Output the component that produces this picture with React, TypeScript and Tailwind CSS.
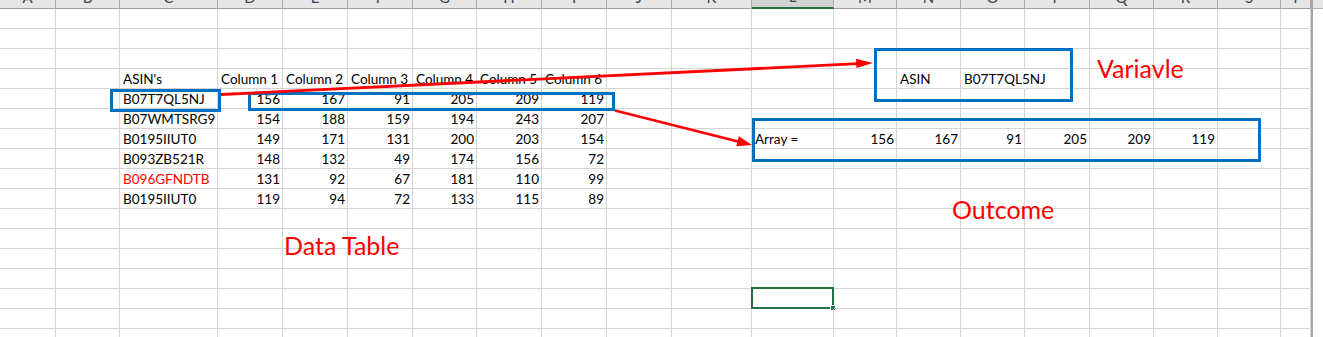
import React from 'react'

type Cell = { v: string; right?: boolean; red?: boolean; spill?: boolean }

const COLS = [
  { l: 'A', w: 'w-[56px]' },
  { l: 'B', w: 'w-[64px]' },
  { l: 'C', w: 'w-[98px]' },
  { l: 'D', w: 'w-[65px]' },
  { l: 'E', w: 'w-[65px]' },
  { l: 'F', w: 'w-[65px]' },
  { l: 'G', w: 'w-[64px]' },
  { l: 'H', w: 'w-[65px]' },
  { l: 'I', w: 'w-[65px]' },
  { l: 'J', w: 'w-[65px]' },
  { l: 'K', w: 'w-[80px]' },
  { l: 'L', w: 'w-[82px]' },
  { l: 'M', w: 'w-[63px]' },
  { l: 'N', w: 'w-[64px]' },
  { l: 'O', w: 'w-[64px]' },
  { l: 'P', w: 'w-[65px]' },
  { l: 'Q', w: 'w-[64px]' },
  { l: 'R', w: 'w-[64px]' },
  { l: 'S', w: 'w-[63px]' },
  { l: 'T', w: 'w-[30px]' },
]

const TABLE = [
  ['B07T7QL5NJ', '156', '167', '91', '205', '209', '119'],
  ['B07WMTSRG9', '154', '188', '159', '194', '243', '207'],
  ['B0195IIUT0', '149', '171', '131', '200', '203', '154'],
  ['B093ZB521R', '148', '132', '49', '174', '156', '72'],
  ['B096GFNDTB', '131', '92', '67', '181', '110', '99'],
  ['B0195IIUT0', '119', '94', '72', '133', '115', '89'],
]

const NUM_COLS = ['D', 'E', 'F', 'G', 'H', 'I']
const OUT_COLS = ['M', 'N', 'O', 'P', 'Q', 'R']

function buildCells() {
  const cells: Record<string, Cell> = {}
  cells['4C'] = { v: "ASIN's" }
  NUM_COLS.forEach((c, i) => (cells['4' + c] = { v: `Column ${i + 1}` }))
  cells['4N'] = { v: 'ASIN' }
  cells['4O'] = { v: 'B07T7QL5NJ', spill: true }
  TABLE.forEach((row, r) => {
    const n = r + 5
    cells[n + 'C'] = { v: row[0], red: row[0] === 'B096GFNDTB' }
    NUM_COLS.forEach((c, i) => (cells[n + c] = { v: row[i + 1], right: true }))
  })
  cells['7L'] = { v: 'Array =' }
  TABLE[0].slice(1).forEach((v, i) => (cells['7' + OUT_COLS[i]] = { v, right: true }))
  return cells
}

const CELLS = buildCells()
const ROWS = Array.from({ length: 17 }, (_, i) => i + 1)

function HeaderRow() {
  return (
    <div className="flex h-[9px]">
      {COLS.map((c) => (
        <div
          key={c.l}
          className={`${c.w} flex shrink-0 items-end justify-center overflow-hidden border-r border-[#ababab] ${
            c.l === 'L' ? 'border-b-2 border-b-[#217346] bg-[#d2d2d2]' : 'border-b border-b-[#9f9f9f] bg-[#e6e6e6]'
          }`}
        >
          <span className="mb-[3px] text-[15px] leading-none text-[#444]">{c.l}</span>
        </div>
      ))}
      <div className="w-[2px] shrink-0 bg-[#a6a6a6]" />
      <div className="flex-1 border-b border-[#b4b4b4] bg-[#e6e6e6]" />
    </div>
  )
}

function SheetRow({ n }: { n: number }) {
  return (
    <div className="flex h-[20px]">
      {COLS.map((c) => {
        const cell = CELLS[n + c.l]
        const selected = n === 15 && c.l === 'L'
        return (
          <div
            key={c.l}
            className={`${c.w} relative flex shrink-0 items-center whitespace-nowrap border-b border-[#d4d4d4] pt-[2px] text-[13.5px] leading-[17px] ${
              cell?.spill ? 'border-r border-r-transparent' : 'border-r'
            } ${cell?.right ? 'justify-end pr-[2px]' : 'pl-[3px]'} ${cell?.red ? 'text-[#ff0000]' : 'text-black'}`}
          >
            {cell?.v}
            {selected && (
              <div className="absolute -top-[2px] -left-[1px] h-[22px] w-[83px] border-2 border-[#217346]">
                <div className="absolute -right-[4px] -bottom-[4px] h-[6px] w-[6px] border border-white bg-[#217346]" />
              </div>
            )}
          </div>
        )
      })}
      <div className="w-[2px] shrink-0 bg-[#a6a6a6]" />
      <div className="flex-1" />
    </div>
  )
}

function Arrows() {
  return (
    <svg className="pointer-events-none absolute inset-0" width="1323" height="337">
      <g fill="#ff0000" stroke="#ff0000">
        <line x1="221" y1="94.5" x2="858" y2="63.7" strokeWidth="2.8" />
        <polygon points="873,63 856,58.8 856.5,68" stroke="none" />
        <line x1="615" y1="110.5" x2="738" y2="141.5" strokeWidth="2.8" />
        <polygon points="752,145 738.8,136.3 736.3,146.2" stroke="none" />
      </g>
    </svg>
  )
}

export default function App() {
  return (
    <div className="relative h-[337px] w-[1323px] overflow-hidden bg-white font-[Lato,sans-serif]">
      <HeaderRow />
      {ROWS.map((n) => (
        <SheetRow key={n} n={n} />
      ))}

      {/* shapes drawn over the sheet */}
      <div className="absolute left-[110px] top-[89px] h-[23px] w-[111px] border-[3px] border-[#0070c0]" />
      <div className="absolute left-[248px] top-[92px] h-[19px] w-[367px] border-[3px] border-[#0070c0]" />
      <div className="absolute left-[874px] top-[48px] h-[54px] w-[199px] border-[3px] border-[#0070c0]" />
      <div className="absolute left-[752px] top-[118px] h-[44px] w-[509px] border-[3px] border-[#0070c0]" />
      <Arrows />

      <div className="absolute left-[284px] top-[229px] text-[25px] leading-[32px] text-[#ff0000]">Data Table</div>
      <div className="absolute left-[1097px] top-[52px] text-[25px] leading-[32px] text-[#ff0000]">Variavle</div>
      <div className="absolute left-[952px] top-[193px] text-[25px] leading-[32px] text-[#ff0000]">Outcome</div>
    </div>
  )
}
